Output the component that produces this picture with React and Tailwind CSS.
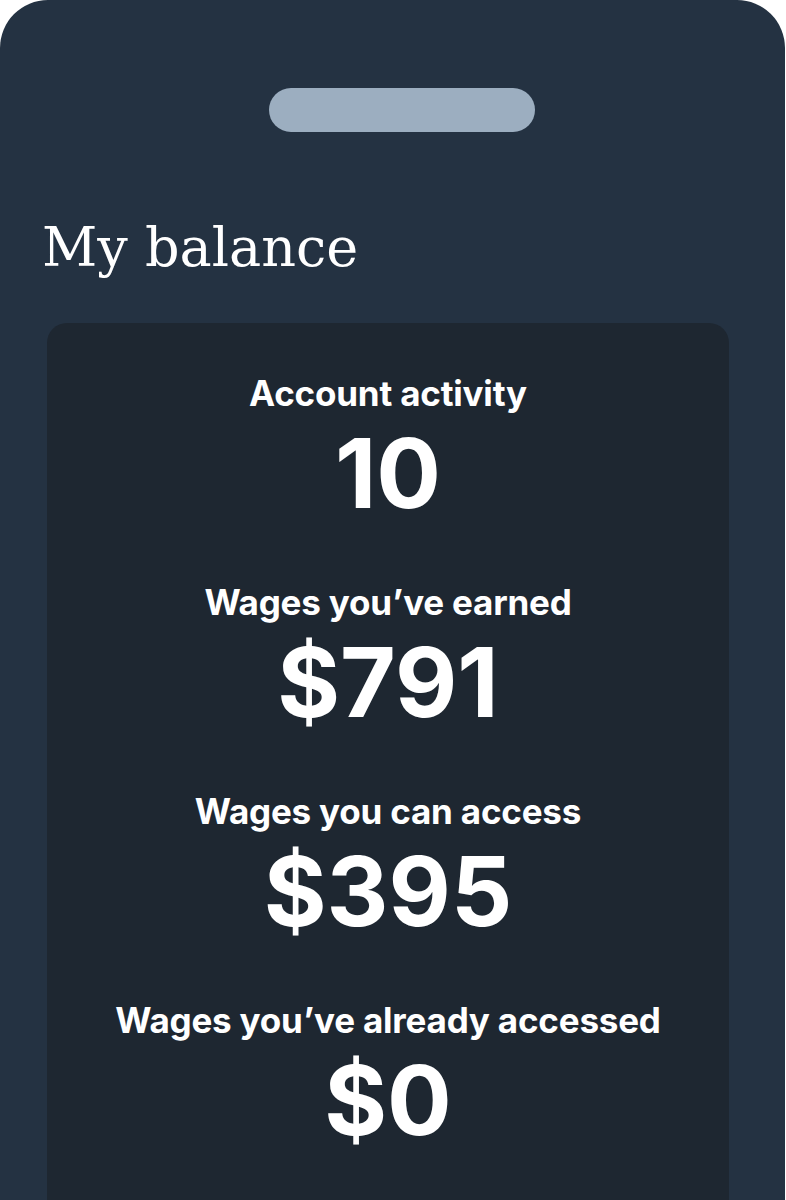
const stats = [
  { label: 'Account activity', value: '10' },
  { label: 'Wages you’ve earned', value: '$791' },
  { label: 'Wages you can access', value: '$395' },
  { label: 'Wages you’ve already accessed', value: '$0' },
]

export default function App() {
  return (
    <div className="min-h-[1200px] bg-white">
      <div className="h-[1200px] w-[785px] overflow-hidden rounded-t-[48px] bg-[#243242] pt-[88px]">
        {/* notch */}
        <div className="ml-[269px] h-[44px] w-[266px] rounded-full bg-[#9caec0]"></div>

        <h1 className="mt-[84px] pl-[42px] text-[54px] leading-[64px] text-white font-['DejaVu_Serif',serif]">
          My balance
        </h1>

        {/* balance card */}
        <div className="mt-[43px] ml-[47px] h-[900px] w-[682px] rounded-t-[20px] bg-[#1e2731] pt-[50px] text-center text-white font-['Inter',sans-serif]">
          <div className="flex flex-col gap-[57px]">
            {stats.map((s, i) => (
              <div key={i} className="flex flex-col gap-[8px]">
                <p className="text-[35px] font-bold leading-[40px] tracking-[-0.2px]">{s.label}</p>
                <p className="text-[96px] font-bold leading-[104px]">{s.value}</p>
              </div>
            ))}
          </div>
        </div>
      </div>
    </div>
  )
}
